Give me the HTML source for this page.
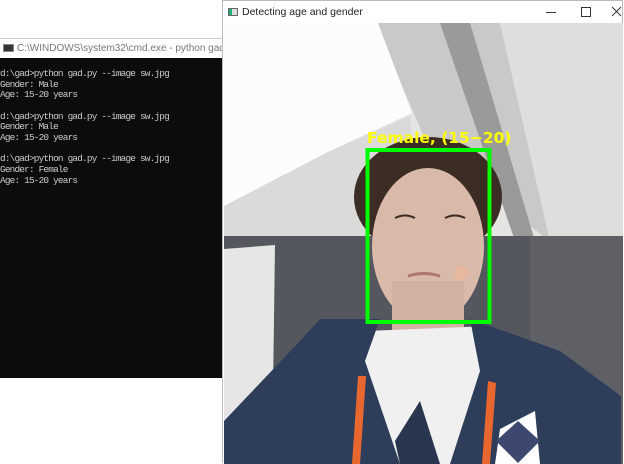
<!DOCTYPE html>
<html><head><style>
*{margin:0;padding:0;box-sizing:border-box}
body{width:624px;height:463px;background:#fff;position:relative;overflow:hidden;font-family:"Liberation Sans",sans-serif}
#cmdt{position:absolute;left:0;top:38px;width:222px;height:20px;background:#fff;border-top:1px solid #ccc;font-size:10px;color:#777;line-height:20px;white-space:nowrap;overflow:hidden}
#cmd{position:absolute;left:0;top:58px;width:223px;height:320px;background:#0c0c0c;color:#ccc;font-family:"Liberation Mono",monospace;font-size:9.4px;letter-spacing:-0.8px;line-height:10.65px;padding-top:11px;white-space:pre}
#win{position:absolute;left:222px;top:0;width:401px;height:463px;background:#fff;border:1px solid #bbb;border-bottom:none}
#wt{height:22px;font-size:10.5px;color:#222;line-height:22px;position:relative}
</style></head><body>
<div id="cmdt"><span style="display:inline-block;width:11px;height:8px;background:#333;border:1px solid #888;margin:0 3px 0 3px;vertical-align:-1px"></span>C:\WINDOWS\system32\cmd.exe - python  gad.py --image</div>
<div id="cmd">d:\gad>python gad.py --image sw.jpg
Gender: Male
Age: 15-20 years

d:\gad>python gad.py --image sw.jpg
Gender: Male
Age: 15-20 years

d:\gad>python gad.py --image sw.jpg
Gender: Female
Age: 15-20 years</div>
<div id="win">
<div id="wt"><span style="position:absolute;left:5px;top:7px;width:10px;height:8px;border:1px solid #666;background:linear-gradient(90deg,#2a7 40%,#ddd 40%)"></span><span style="position:absolute;left:19px">Detecting age and gender</span>
<svg style="position:absolute;left:310px;top:0" width="90" height="22"><g stroke="#333" stroke-width="1" fill="none"><path d="M13 11.5h10"/><rect x="48.5" y="6.5" width="9" height="9"/><path d="M79 6l9 9M88 6l-9 9"/></g></svg></div>
<svg style="position:absolute;left:1px;top:22px" width="399" height="441" viewBox="224 22 399 441">
<rect x="224" y="22" width="399" height="441" fill="#e4e4e2"/>
<polygon points="375,22 500,22 550,240 430,150" fill="#c9c9c7"/>
<polygon points="440,22 470,22 535,240 515,240" fill="#9a9a98"/>
<polygon points="500,22 623,22 623,240 550,240" fill="#dededc"/>
<polygon points="224,22 378,22 412,112 330,150 224,205" fill="#fcfcfc"/>
<polygon points="224,205 330,150 410,115 420,240 224,250" fill="#dadad8"/>
<rect x="224" y="235" width="399" height="228" fill="#55575e"/>
<rect x="530" y="235" width="93" height="228" fill="#5f6066"/>
<polygon points="224,248 275,244 272,463 224,463" fill="#e6e6e6"/>
<ellipse cx="428" cy="196" rx="74" ry="60" fill="#3b2c24"/>
<ellipse cx="428" cy="245" rx="56" ry="78" fill="#d9b9aa"/>
<rect x="392" y="280" width="72" height="60" fill="#d3b1a2"/>
<polygon points="365,330 490,325 500,463 360,463" fill="#f0f0f0"/>
<polygon points="224,420 300,340 320,318 380,318 365,360 400,463 224,463" fill="#2d3d5a"/>
<polygon points="470,318 560,350 621,395 621,463 450,463 480,370" fill="#2d3d5a"/>
<polygon points="395,440 420,400 440,463 400,463" fill="#2a3650"/>
<polygon points="358,375 366,375 360,463 352,463" fill="#e8672e"/>
<polygon points="488,380 496,382 490,463 482,463" fill="#e8672e"/>
<polygon points="500,428 535,410 540,463 495,463" fill="#fff"/>
<polygon points="518,420 540,440 518,462 496,440" fill="#3d4870"/>
<path d="M395 217q10-5 20 0M445 217q10-5 20 0" stroke="#3a2a22" stroke-width="2" fill="none"/>
<path d="M408 275q16-5 32 0" stroke="#b07670" stroke-width="3" fill="none"/>
<circle cx="461" cy="272" r="7" fill="#e6b89e"/>
<rect x="367.5" y="149" width="122" height="172" fill="none" stroke="#00ff00" stroke-width="4"/>
<text x="367" y="142" fill="#ffff00" font-family="DejaVu Sans,sans-serif" font-weight="bold" font-size="15.5">Female, (15−20)</text>
</svg>
</div>
</body></html>
